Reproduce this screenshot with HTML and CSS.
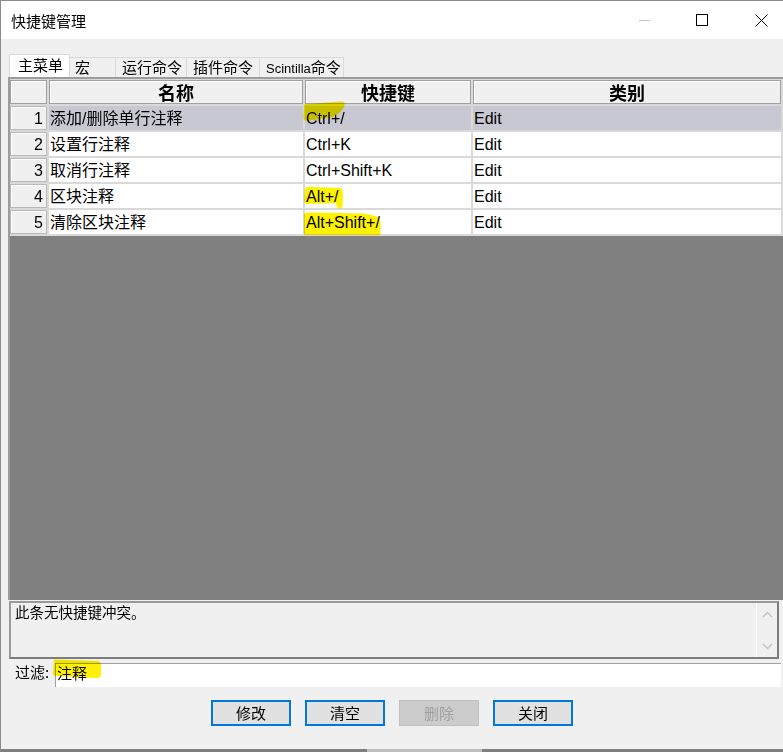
FILE: index.html
```html
<!DOCTYPE html>
<html lang="zh-CN">
<head>
<meta charset="utf-8">
<title>快捷键管理</title>
<link rel="stylesheet" href="styles.css">
</head>
<body>
<div class="window">
  <div class="titlebar">
    <span class="title">快捷键管理</span>
    <div class="controls">
      <svg class="ctl ctl-min" width="12" height="12" viewBox="0 0 12 12"><path d="M0 6.5H11" stroke="#c4c4c4" stroke-width="1"/></svg>
      <svg class="ctl ctl-max" width="12" height="12" viewBox="0 0 12 12"><rect x="0.5" y="0.5" width="11" height="11" fill="none" stroke="#000" stroke-width="1"/></svg>
      <svg class="ctl ctl-close" width="13" height="13" viewBox="0 0 13 13"><path d="M0.5 0.5L12.5 12.5M12.5 0.5L0.5 12.5" stroke="#000" stroke-width="1"/></svg>
    </div>
  </div>
  <div class="client">
    <div class="tabs">
      <div class="tab active">主菜单</div>
      <div class="tab tab-macro">宏</div>
      <div class="tab tab-run">运行命令</div>
      <div class="tab tab-plugin">插件命令</div>
      <div class="tab tab-sci"><span class="latin">Scintilla</span>命令</div>
    </div>
    <div class="panel">
      <div class="grid">
        <div class="hc"></div>
        <div class="hc">名称</div>
        <div class="hc">快捷键</div>
        <div class="hc">类别</div>

        <div class="rh">1</div>
        <div class="cell sel">添加/删除单行注释</div>
        <div class="cell sel">Ctrl+/<svg class="mark mark-1" width="43" height="22" viewBox="0 0 43 22"><path d="M1 6 C1 4 3 4 8 4 L36 1.5 C40 1 42.5 2 41.5 5 C40.5 9 36 14 30 17 L6 20.5 C2 21.5 0.5 20.5 0.5 17 Z" fill="#fff200"/></svg></div>
        <div class="cell sel">Edit</div>

        <div class="rh">2</div>
        <div class="cell">设置行注释</div>
        <div class="cell">Ctrl+K</div>
        <div class="cell">Edit</div>

        <div class="rh">3</div>
        <div class="cell">取消行注释</div>
        <div class="cell">Ctrl+Shift+K</div>
        <div class="cell">Edit</div>

        <div class="rh">4</div>
        <div class="cell">区块注释</div>
        <div class="cell">Alt+/<svg class="mark mark-4" width="40" height="24" viewBox="0 0 40 24"><path d="M1 3 C1 1 3 1 6 1 L34 2 C38 2 39 4 39 8 L38.5 20 C38.5 23 34 23.5 33 20.5 L32 17 L4 18 C1 18 0 16 0 14 Z" fill="#fff200"/></svg></div>
        <div class="cell">Edit</div>

        <div class="rh">5</div>
        <div class="cell">清除区块注释</div>
        <div class="cell">Alt+Shift+/<svg class="mark mark-5" width="77" height="23" viewBox="0 0 77 23"><path d="M0 3 C0 1 3 0.5 6 0.5 L60 1.5 L71 4 C75 5 76.5 7 76.5 10 L76.5 23 L0 23 Z" fill="#fff200"/></svg></div>
        <div class="cell">Edit</div>
      </div>
    </div>
    <div class="conflict">
      <div class="conflict-text">此条无快捷键冲突。</div>
      <div class="scroll">
        <svg width="11" height="7" viewBox="0 0 11 7"><path d="M1 6L5.5 1.5L10 6" fill="none" stroke="#c2c2c2" stroke-width="1.4"/></svg>
        <svg width="11" height="7" viewBox="0 0 11 7"><path d="M1 1L5.5 5.5L10 1" fill="none" stroke="#c2c2c2" stroke-width="1.4"/></svg>
      </div>
    </div>
    <div class="filter">
      <div class="filter-label">过滤:</div>
      <div class="field">注释<svg class="mark mark-f" width="48" height="19" viewBox="0 0 48 19"><path d="M1 0.5 L44 2 C47 2 48 4 48 7 L48 16 C48 18 46 19 44 19 L3 17 C1 17 0 16 0 14 Z" fill="#fff200"/></svg></div>
    </div>
    <div class="buttons">
      <button class="btn" type="button">修改</button>
      <button class="btn" type="button">清空</button>
      <button class="btn disabled" type="button" disabled>删除</button>
      <button class="btn" type="button">关闭</button>
    </div>
  </div>
  <div class="taskstrip"></div>
</div>
</body>
</html>
```

FILE: styles.css
```css
* {
  box-sizing: border-box;
}

html,
body {
  margin: 0;
  padding: 0;
}

body {
  width: 783px;
  height: 752px;
  overflow: hidden;
  background: #f0f0f0;
  color: #000;
  font-family: "Liberation Sans", "Noto Sans CJK SC", sans-serif;
}

.window {
  width: 783px;
  height: 752px;
  border-left: 1px solid #8a8a8a;
  display: flex;
  flex-direction: column;
}

/* title bar */
.titlebar {
  flex: none;
  height: 39px;
  background: #fff;
  border-top: 1px solid #8a8a8a;
  display: flex;
  align-items: center;
  justify-content: space-between;
  padding-left: 10px;
}

.title {
  font-family: "Noto Sans CJK SC", sans-serif;
  font-size: 15px;
  line-height: 20px;
  margin-top: 2px;
}

.controls {
  display: flex;
  align-items: center;
  margin-right: 15px;
}

.ctl {
  display: block;
}

.ctl-min {
  margin-right: 45px;
}

.ctl-max {
  margin-right: 47px;
}

/* client area */
.client {
  flex: none;
  height: 710px;
  background: #f0f0f0;
  display: flex;
  flex-direction: column;
}

.tabs {
  flex: none;
  display: flex;
  align-items: flex-end;
  height: 23px;
  margin: 15px 0 0 8px;
  font-family: "Liberation Sans", "Noto Sans CJK SC", sans-serif;
  font-size: 15px;
}

.tab {
  height: 20px;
  border: 1px solid #d9d9d9;
  border-left: none;
  border-bottom: none;
  padding-left: 6px;
  line-height: 19px;
  white-space: nowrap;
  background: #f0f0f0;
}

.tab.active {
  width: 61px;
  height: 23px;
  background: #fff;
  border-left: 1px solid #d9d9d9;
  padding-left: 8px;
  line-height: 21px;
}

.tab-macro {
  width: 46px;
  padding-left: 5px;
}

.tab-run {
  width: 71px;
}

.tab-plugin {
  width: 73px;
}

.tab-sci {
  width: 84px;
}

.latin {
  font-size: 13px;
}

/* grid panel */
.panel {
  flex: none;
  width: 775px;
  height: 523px;
  margin-left: 7px;
  background: #808080;
  border-top: 2px solid #9c9c9c;
  border-left: 2px solid #9c9c9c;
}

.grid {
  display: grid;
  grid-template-columns: 37px 254px 166px 308px;
  grid-auto-rows: 24px;
  gap: 2px;
  padding: 1px 2px 2px 0;
  background: #d9d9d9;
}

.hc {
  background: #f0f0f0;
  border: 1px solid #a0a0a0;
  box-shadow: inset 1px 1px 0 #fff;
  display: flex;
  align-items: center;
  justify-content: center;
  font-family: "Noto Sans CJK SC", sans-serif;
  font-weight: 700;
  font-size: 18px;
  line-height: 22px;
}

.rh {
  background: #f0f0f0;
  border: 1px solid #b9b9b9;
  box-shadow: inset 1px 1px 0 #fff;
  display: flex;
  align-items: center;
  justify-content: flex-end;
  padding: 2px 3px 0 0;
  font-size: 16px;
  line-height: 20px;
}

.cell {
  position: relative;
  background: #fff;
  display: flex;
  align-items: center;
  padding: 2px 0 0 1px;
  font-size: 16px;
  line-height: 20px;
  white-space: nowrap;
}

.cell.sel {
  background: #c8c8d2;
}

/* marker highlights drawn over the text */
.mark {
  position: absolute;
  mix-blend-mode: multiply;
  pointer-events: none;
}

.mark-1 {
  left: -2px;
  top: -6px;
}

.mark-4 {
  left: -1px;
  top: 2px;
}

.mark-5 {
  left: -1px;
  top: 2px;
}

.mark-f {
  left: -3px;
  top: -5px;
}

/* conflict box */
.conflict {
  flex: none;
  display: flex;
  width: 770px;
  height: 58px;
  margin: 1px 0 0 8px;
  border: 2px solid #808080;
  border-color: #9a9a9a #7c7c7c #7c7c7c #9a9a9a;
  background: #f0f0f0;
}

.conflict-text {
  flex: 1;
  padding: 0 0 0 4px;
  font-family: "Noto Sans CJK SC", sans-serif;
  font-size: 14.5px;
  line-height: 18px;
}

.scroll {
  width: 21px;
  border-left: 1px solid #fff;
  display: flex;
  flex-direction: column;
  justify-content: space-between;
  align-items: center;
  padding: 8px 0 7px;
}

.scroll svg {
  display: block;
}

/* filter row */
.filter {
  flex: none;
  display: flex;
  height: 24px;
  margin-top: 4px;
}

.filter-label {
  width: 54px;
  padding-left: 14px;
  font-family: "Noto Sans CJK SC", sans-serif;
  font-size: 15px;
  line-height: 18px;
}

.field {
  position: relative;
  width: 726px;
  background: #fff;
  border-top: 1px solid #a0a0a0;
  border-left: 1px solid #a0a0a0;
  padding-left: 1px;
  font-family: "Noto Sans CJK SC", sans-serif;
  font-size: 15px;
  line-height: 18px;
}

/* buttons */
.buttons {
  flex: none;
  display: flex;
  justify-content: center;
  gap: 14px;
  margin-top: 13px;
}

.btn {
  width: 80px;
  height: 26px;
  margin: 0;
  padding: 0;
  background: #e1e1e1;
  border: 2px solid #0078d7;
  border-radius: 0;
  font-family: "Noto Sans CJK SC", sans-serif;
  font-size: 15px;
  line-height: 20px;
  color: #000;
  display: flex;
  align-items: center;
  justify-content: center;
}

.btn.disabled {
  background: #cccccc;
  border: 1px solid #bfbfbf;
  color: #a0a0a0;
}

.taskstrip {
  flex: none;
  height: 3px;
  background: linear-gradient(to right, #7f7f7f 366px, #bdbdbd 366px, #bdbdbd 481px, #7f7f7f 481px);
}
```
